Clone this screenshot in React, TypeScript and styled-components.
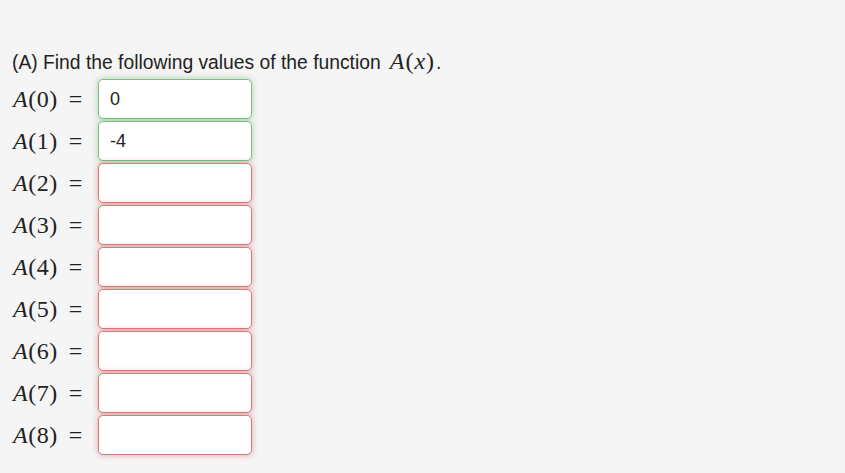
import React, { FC } from 'react';
import styled, { createGlobalStyle } from 'styled-components';

const GlobalStyle = createGlobalStyle`
  html, body {
    margin: 0;
    padding: 0;
    background: #f5f5f5;
  }
  body {
    font-family: "Liberation Sans", Arial, sans-serif;
    color: #222;
  }
`;

const Page = styled.div`
  width: 845px;
  height: 473px;
  padding: 49px 0 0 12px;
  box-sizing: border-box;
`;

const Prompt = styled.p`
  margin: 0 0 4px;
  font-size: 19.3px;
  line-height: 24px;
  display: flex;
  align-items: baseline;
  gap: 9px;
`;

const MathInline = styled.span`
  font-family: "Liberation Serif", "DejaVu Serif", serif;
  font-size: 24px;
  letter-spacing: 1px;
  i {
    font-style: italic;
  }
`;

const Period = styled.span`
  margin-left: -8px;
`;

const Rows = styled.div`
  display: flex;
  flex-direction: column;
  gap: 2px;
`;

const Row = styled.div`
  display: grid;
  grid-template-columns: 86px 154px;
  align-items: center;
  height: 40px;
`;

const Label = styled.span`
  font-family: "Liberation Serif", "DejaVu Serif", serif;
  font-size: 24px;
  padding-left: 1px;
  letter-spacing: 0.5px;
  i {
    font-style: italic;
  }
`;

const Eq = styled.span`
  margin-left: 11px;
`;

const Answer = styled.input<{ $ok: boolean }>`
  box-sizing: border-box;
  width: 154px;
  height: 40px;
  padding: 0 11px;
  border: 1px solid ${(p) => (p.$ok ? '#7fbf7f' : '#d67a7c')};
  border-radius: 5px;
  background: #fff;
  font-family: "Liberation Sans", Arial, sans-serif;
  font-size: 18px;
  color: #222;
  outline: none;
  box-shadow: 0 0 6px
    ${(p) => (p.$ok ? 'rgba(92, 170, 92, 0.5)' : 'rgba(210, 80, 84, 0.5)')};
`;

const values = ['0', '-4', '', '', '', '', '', '', ''];

const App: FC = () => {
  return (
    <>
      <GlobalStyle />
      <Page>
        <Prompt>
          (A) Find the following values of the function
          <MathInline>
            <i>A</i>(<i>x</i>)
          </MathInline>
          <Period>.</Period>
        </Prompt>
        <Rows>
          {values.map((v, i) => (
            <Row key={i}>
              <Label>
                <i>A</i>({i})<Eq>=</Eq>
              </Label>
              <Answer $ok={i < 2} defaultValue={v} />
            </Row>
          ))}
        </Rows>
      </Page>
    </>
  );
};

export default App;
